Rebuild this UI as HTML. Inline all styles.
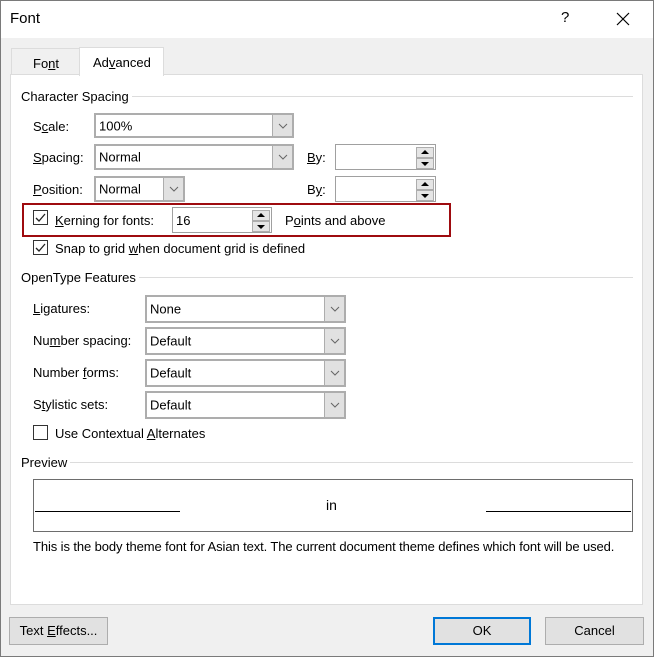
<!DOCTYPE html>
<html><head><style>
*{box-sizing:border-box;margin:0;padding:0}
body{width:654px;height:657px;overflow:hidden;background:#f0f0f0;font-family:"Liberation Sans",sans-serif;font-size:13px;color:#000;position:relative}
.a{position:absolute;white-space:nowrap}
.win{position:absolute;left:0;top:0;width:654px;height:657px;border:1px solid #7a7a7a}
.dd{position:absolute;background:#fff;border:2px solid #adadad;}
.dd .ar{position:absolute;right:0;top:0;bottom:0;width:20px;background:#e1e1e1;border-left:1px solid #adadad}
.dd .ar svg{position:absolute;left:5px;top:50%;margin-top:-3px}
.dd span{position:absolute;left:3px;top:50%;transform:translateY(-50%)}
.in{position:absolute;background:#fff;border:1px solid #a0a0a0}
.sp{position:absolute;right:1px;top:1px;bottom:1px;width:18px;}
.sp div{position:absolute;left:0;width:18px;height:11px;background:#e5e5e5;border:1px solid #adadad}
.sp div.u::after{content:"";position:absolute;left:4px;top:2px;border-left:4px solid transparent;border-right:4px solid transparent;border-bottom:4px solid #000}
.sp div.d::after{content:"";position:absolute;left:4px;top:3px;border-left:4px solid transparent;border-right:4px solid transparent;border-top:4px solid #000}
.cb{position:absolute;width:15px;height:15px;border:1px solid #333;background:#fff}
.hr{position:absolute;height:1px;background:#dcdcdc}
.btn{position:absolute;height:28px;background:#e1e1e1;border:1px solid #adadad;text-align:center;line-height:26px}
u{text-decoration:underline}
</style></head><body>
<div class="a" style="left:0;top:0;width:654px;height:38px;background:#fff"></div>
<div class="a" style="left:10px;top:10px;font-size:15px">Font</div>
<div class="a" style="left:561px;top:9px;font-size:15px">?</div>
<svg class="a" style="left:616px;top:12px" width="14" height="14"><path d="M1 1L13 13M13 1L1 13" stroke="#000" stroke-width="1.2"/></svg>

<div class="a" style="left:11px;top:48px;width:69px;height:27px;background:#f0f0f0;border:1px solid #dcdcdc;border-bottom:none"></div>
<div class="a" style="left:33px;top:56px">Fo<u>n</u>t</div>
<div class="a" style="left:10px;top:74px;width:633px;height:531px;background:#fff;border:1px solid #dcdcdc"></div>
<div class="a" style="left:79px;top:47px;width:85px;height:29px;background:#fff;border:1px solid #dcdcdc;border-bottom:none"></div>
<div class="a" style="left:93px;top:55px">Ad<u>v</u>anced</div>

<div class="a" style="left:21px;top:89px">Character Spacing</div>
<div class="hr" style="left:132px;top:96px;width:501px"></div>
<div class="a" style="left:33px;top:119px">S<u>c</u>ale:</div>
<div class="dd" style="left:94px;top:113px;width:200px;height:25px"><span>100%</span><div class="ar"><svg width="10" height="6"><path d="M1 1L5 5L9 1" fill="none" stroke="#666"/></svg></div></div>
<div class="a" style="left:33px;top:150px"><u>S</u>pacing:</div>
<div class="dd" style="left:94px;top:144px;width:200px;height:26px"><span>Normal</span><div class="ar"><svg width="10" height="6"><path d="M1 1L5 5L9 1" fill="none" stroke="#666"/></svg></div></div>
<div class="a" style="left:33px;top:182px"><u>P</u>osition:</div>
<div class="dd" style="left:94px;top:176px;width:91px;height:26px"><span>Normal</span><div class="ar"><svg width="10" height="6"><path d="M1 1L5 5L9 1" fill="none" stroke="#666"/></svg></div></div>
<div class="a" style="left:307px;top:150px"><u>B</u>y:</div>
<div class="in" style="left:335px;top:144px;width:101px;height:26px"><div class="sp"><div class="u" style="top:1px"></div><div class="d" style="top:12px"></div></div></div>
<div class="a" style="left:307px;top:182px">B<u>y</u>:</div>
<div class="in" style="left:335px;top:176px;width:101px;height:26px"><div class="sp"><div class="u" style="top:1px"></div><div class="d" style="top:12px"></div></div></div>

<div class="a" style="left:22px;top:203px;width:429px;height:34px;border:2px solid #9e0b0f"></div>
<div class="cb" style="left:33px;top:210px"><svg width="13" height="13"><path d="M2 7L5 10L11 3" fill="none" stroke="#222" stroke-width="1.3"/></svg></div>
<div class="a" style="left:55px;top:213px"><u>K</u>erning for fonts:</div>
<div class="in" style="left:172px;top:207px;width:100px;height:26px"><span style="position:absolute;left:3px;top:5px">16</span><div class="sp"><div class="u" style="top:1px"></div><div class="d" style="top:12px"></div></div></div>
<div class="a" style="left:285px;top:213px">P<u>o</u>ints and above</div>
<div class="cb" style="left:33px;top:240px"><svg width="13" height="13"><path d="M2 7L5 10L11 3" fill="none" stroke="#222" stroke-width="1.3"/></svg></div>
<div class="a" style="left:55px;top:241px">Snap to grid <u>w</u>hen document grid is defined</div>

<div class="a" style="left:21px;top:270px">OpenType Features</div>
<div class="hr" style="left:139px;top:277px;width:494px"></div>
<div class="a" style="left:33px;top:301px"><u>L</u>igatures:</div>
<div class="dd" style="left:145px;top:295px;width:201px;height:28px"><span>None</span><div class="ar"><svg width="10" height="6"><path d="M1 1L5 5L9 1" fill="none" stroke="#666"/></svg></div></div>
<div class="a" style="left:33px;top:333px">Nu<u>m</u>ber spacing:</div>
<div class="dd" style="left:145px;top:327px;width:201px;height:28px"><span>Default</span><div class="ar"><svg width="10" height="6"><path d="M1 1L5 5L9 1" fill="none" stroke="#666"/></svg></div></div>
<div class="a" style="left:33px;top:365px">Number <u>f</u>orms:</div>
<div class="dd" style="left:145px;top:359px;width:201px;height:28px"><span>Default</span><div class="ar"><svg width="10" height="6"><path d="M1 1L5 5L9 1" fill="none" stroke="#666"/></svg></div></div>
<div class="a" style="left:33px;top:397px">S<u>t</u>ylistic sets:</div>
<div class="dd" style="left:145px;top:391px;width:201px;height:28px"><span>Default</span><div class="ar"><svg width="10" height="6"><path d="M1 1L5 5L9 1" fill="none" stroke="#666"/></svg></div></div>
<div class="cb" style="left:33px;top:425px"></div>
<div class="a" style="left:55px;top:426px">Use Contextual <u>A</u>lternates</div>

<div class="a" style="left:21px;top:455px">Preview</div>
<div class="hr" style="left:70px;top:462px;width:563px"></div>
<div class="a" style="left:33px;top:479px;width:600px;height:53px;border:1px solid #6d6d6d"></div>
<div class="a" style="left:35px;top:511px;width:145px;height:1px;background:#000"></div>
<div class="a" style="left:486px;top:511px;width:145px;height:1px;background:#000"></div>
<div class="a" style="left:326px;top:497px;font-size:14px">in</div>
<div class="a" style="left:33px;top:539px;letter-spacing:-0.1px">This is the body theme font for Asian text. The current document theme defines which font will be used.</div>

<div class="btn" style="left:9px;top:617px;width:99px">Text <u>E</u>ffects...</div>
<div class="btn" style="left:433px;top:617px;width:98px;border:2px solid #0078d7;line-height:24px">OK</div>
<div class="btn" style="left:545px;top:617px;width:99px">Cancel</div>
<div class="win"></div>
</body></html>
